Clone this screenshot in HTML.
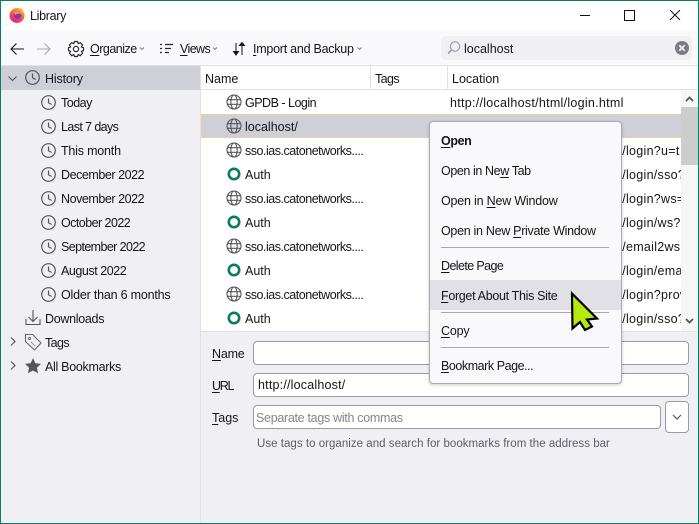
<!DOCTYPE html>
<html><head><meta charset="utf-8"><title>Library</title>
<style>
html,body{margin:0;padding:0}
body{width:699px;height:524px;position:relative;overflow:hidden;background:#fff;font-family:"Liberation Sans",sans-serif;font-size:12.5px;color:#15141a}
div,span.t{position:absolute}
.t{position:absolute;white-space:nowrap;line-height:16px;height:16px}
u{text-underline-offset:2px;text-decoration-thickness:1px}
svg{position:absolute;overflow:visible}
.f{background:#fff;border:1px solid #9a9aa3;border-radius:4px;box-sizing:border-box}
.sep{background:#a8a8ae;height:1px;left:441px;width:168px}
.d{height:1px;left:201px;width:480px;background:repeating-linear-gradient(90deg,#f7d96a 0 2px,transparent 2px 4px)}
</style></head><body>
<div style="left:1px;top:31px;width:697px;height:34px;background:#f9f9fb"></div>
<div style="left:1px;top:65px;width:697px;height:1px;background:#e0e0e6"></div>
<div style="left:1px;top:66px;width:199px;height:457px;background:#f0f0f4"></div>
<div style="left:200px;top:66px;width:1px;height:457px;background:#e0e0e6"></div>
<div style="left:1px;top:66px;width:199px;height:24px;background:#cfcfd8"></div>
<div style="left:201px;top:89px;width:497px;height:1px;background:#e0e0e6"></div>
<div style="left:370px;top:66px;width:1px;height:23px;background:#e0e0e6"></div>
<div style="left:447px;top:66px;width:1px;height:23px;background:#e0e0e6"></div>
<div style="left:201px;top:114px;width:480px;height:24px;background:#cfcfd8"></div>
<div class="d" style="top:114px"></div>
<div class="d" style="top:137px"></div>
<div style="left:201px;top:114px;width:1px;height:24px;background:repeating-linear-gradient(0deg,#f7d96a 0 2px,transparent 2px 4px)"></div>
<div style="left:681px;top:90px;width:17px;height:241px;background:#f6f6f6"></div>
<div style="left:681px;top:107px;width:17px;height:58px;background:#cdcdcd"></div>
<div style="left:201px;top:331px;width:497px;height:192px;background:#f0f0f4;border-top:1px solid #e0e0e6;box-sizing:border-box"></div>

<!-- title bar -->
<svg style="left:9px;top:7px" width="16" height="16" viewBox="0 0 16 16"><defs><linearGradient id="g" x1="0.8" y1="0" x2="0.2" y2="1"><stop offset="0" stop-color="#ffbd2e"/><stop offset=".5" stop-color="#ff5a36"/><stop offset="1" stop-color="#e31587"/></linearGradient></defs><circle cx="8" cy="8.5" r="7.5" fill="url(#g)"/><path d="M12 0C13 3 15 4 15.5 7L11 5Z" fill="#ffb02e"/><circle cx="8.5" cy="8" r="4" fill="#7a34d8"/><path d="M5 6C7 3 12 4 12.5 8 11 6 8 6 6.5 8Z" fill="#ff9a2e"/></svg>
<span class="t" style="left:30px;top:8px;letter-spacing:-.3px">Library</span>
<svg style="left:0;top:0" width="699" height="31"><path d="M580 15.5H590M624.5 10.5H634.5V20.5H624.5Z" fill="none" stroke="#111"/><path d="M670 10L680 20M680 10L670 20" stroke="#111" fill="none"/></svg>

<!-- toolbar -->
<svg style="left:0;top:31px" width="699" height="34">
<path d="M24 18H11M16.5 12.5L11 18L16.5 23.5" fill="none" stroke="#15141a" stroke-width="1.1"/>
<path d="M37 18H50M44.5 12.5L50 18L44.5 23.5" fill="none" stroke="#a9a9ae" stroke-width="1.1"/>
<g fill="none" stroke="#2b2a33" stroke-width="1.2"><circle cx="76" cy="18" r="2.6"/><path d="M74.5 10.5H77.5L78.2 12.6L80.3 11.7L82.5 13.9L81.5 16L83.5 16.7V19.7L81.5 20.3L82.5 22.4L80.3 24.6L78.2 23.6L77.5 25.5H74.5L73.8 23.6L71.7 24.6L69.5 22.4L70.5 20.3L68.5 19.7V16.7L70.5 16L69.5 13.9L71.7 11.7L73.8 12.6Z"/></g>
<path d="M140 16.5L142 18.5L144 16.5" fill="none" stroke="#777" stroke-width=".9"/>
<path d="M160 13.5H162M160 17.5H162M160 21.5H162M165 13.5H173M165 17.5H171M165 21.5H169" stroke="#2b2a33" stroke-width="1.2" fill="none"/>
<path d="M213 16.5L215 18.5L217 16.5" fill="none" stroke="#777" stroke-width=".9"/>
<path d="M236 12V23M233.5 20.5L236 24L238.5 20.5Z M242 24V12M239.5 14.5L242 11.5L244.5 14.5Z" fill="#15141a" stroke="#15141a" stroke-width="1"/>
<path d="M357.5 16.5L359.5 18.5L361.5 16.5" fill="none" stroke="#777" stroke-width=".9"/>
</svg>
<span class="t" style="left:90px;top:41px;letter-spacing:-.5px"><u>O</u>rganize</span>
<span class="t" style="left:180px;top:41px;letter-spacing:-.6px"><u>V</u>iews</span>
<span class="t" style="left:253px;top:41px;letter-spacing:-.25px"><u>I</u>mport and Backup</span>
<div style="left:441px;top:36px;width:251px;height:24px;background:#f0f0f4;border-radius:4px"></div>
<svg style="left:447px;top:41px" width="16" height="16"><circle cx="8" cy="5.5" r="4.7" fill="none" stroke="#8f8f9d" stroke-width="1"/><path d="M4.5 9L1 12.5" stroke="#8f8f9d" stroke-width="1.3"/></svg>
<span class="t" style="left:464px;top:41px">localhost</span>
<svg style="left:675px;top:41px" width="14" height="14"><circle cx="7" cy="7" r="7" fill="#7b7b82"/><path d="M4.3 4.3L9.7 9.7M9.7 4.3L4.3 9.7" stroke="#f0f0f4" stroke-width="1.8"/></svg>

<!-- sidebar -->
<svg style="left:0;top:66px" width="200" height="320" fill="none">
<defs><g id="c"><circle cx="7.5" cy="7.5" r="6.8" stroke="#55555c" stroke-width="1.2"/><path d="M7.5 3.5V7.8L10.8 9.5" stroke="#55555c" stroke-width="1.2"/></g></defs>
<path d="M8.5 10.5L12.5 14.5L16.5 10.5" stroke="#55555c" stroke-width="1.1"/>
<use href="#c" x="25" y="4"/><use href="#c" x="41" y="29"/><use href="#c" x="41" y="53"/><use href="#c" x="41" y="77"/><use href="#c" x="41" y="101"/><use href="#c" x="41" y="125"/><use href="#c" x="41" y="149"/><use href="#c" x="41" y="173"/><use href="#c" x="41" y="197"/><use href="#c" x="41" y="221"/>
<path d="M33 244V255M28.5 251L33 255.5L37.5 251M26 253V258.5H40V253" stroke="#55555c" stroke-width="1.1"/>
<path d="M11 271.5L15 275.5L11 279.5M11 295.5L15 299.5L11 303.5" stroke="#55555c" stroke-width="1.1"/>
<path d="M25.5 268.5L32.5 268.5L41 277L34.5 284L25.5 275.5Z" stroke="#6a6a70" stroke-width="1.1"/><circle cx="29.5" cy="272.5" r="1.1" stroke="#55555c" stroke-width=".8"/><path d="M31 276L35 280" stroke="#9a9aa0"/>
<path d="M33 292L35.4 297.2L41 297.9L36.9 301.7L38 307.3L33 304.5L28 307.3L29.1 301.7L25 297.9L30.6 297.2Z" fill="#55555c"/>
</svg>
<span class="t" style="left:45px;top:71px;letter-spacing:-.15px">History</span>
<span class="t" style="left:61px;top:95px;letter-spacing:-.5px">Today</span>
<span class="t" style="left:61px;top:119px;letter-spacing:-.6px">Last 7 days</span>
<span class="t" style="left:61px;top:143px;letter-spacing:-.2px">This month</span>
<span class="t" style="left:61px;top:167px;letter-spacing:-.45px">December 2022</span>
<span class="t" style="left:61px;top:191px;letter-spacing:-.45px">November 2022</span>
<span class="t" style="left:61px;top:215px;letter-spacing:-.55px">October 2022</span>
<span class="t" style="left:61px;top:239px;letter-spacing:-.6px">September 2022</span>
<span class="t" style="left:61px;top:263px;letter-spacing:-.45px">August 2022</span>
<span class="t" style="left:61px;top:287px;letter-spacing:-.2px">Older than 6 months</span>
<span class="t" style="left:45px;top:311px;letter-spacing:-.3px">Downloads</span>
<span class="t" style="left:45px;top:335px;letter-spacing:-.6px">Tags</span>
<span class="t" style="left:45px;top:359px;letter-spacing:-.3px">All Bookmarks</span>

<!-- table -->
<span class="t" style="left:205px;top:71px">Name</span>
<span class="t" style="left:375px;top:71px;letter-spacing:-.6px">Tags</span>
<span class="t" style="left:452px;top:71px">Location</span>
<svg style="left:201px;top:90px" width="60" height="240" fill="none">
<defs><g id="w" stroke="#55555c" stroke-width="1.1"><circle cx="33" cy="12" r="7"/><ellipse cx="33" cy="12" rx="3.2" ry="7"/><path d="M26 9.7H40M26 14.3H40"/></g><circle id="a" cx="33" cy="12" r="5.2" stroke="#0e7a5f" stroke-width="2.6"/></defs>
<use href="#w"/><use href="#w" y="24"/><use href="#w" y="48"/><use href="#a" y="72"/><use href="#w" y="96"/><use href="#a" y="120"/><use href="#w" y="144"/><use href="#a" y="168"/><use href="#w" y="192"/><use href="#a" y="216"/>
</svg>
<span class="t" style="left:245px;top:95px;letter-spacing:-.5px">GPDB - Login</span>
<span class="t" style="left:245px;top:119px">localhost/</span>
<span class="t" style="left:245px;top:143px;letter-spacing:-.48px">sso.ias.catonetworks....</span>
<span class="t" style="left:245px;top:167px">Auth</span>
<span class="t" style="left:245px;top:191px;letter-spacing:-.48px">sso.ias.catonetworks....</span>
<span class="t" style="left:245px;top:215px">Auth</span>
<span class="t" style="left:245px;top:239px;letter-spacing:-.48px">sso.ias.catonetworks....</span>
<span class="t" style="left:245px;top:263px">Auth</span>
<span class="t" style="left:245px;top:287px;letter-spacing:-.48px">sso.ias.catonetworks....</span>
<span class="t" style="left:245px;top:311px">Auth</span>
<span class="t" style="left:450px;top:95px;letter-spacing:.28px">http://localhost/html/login.html</span>
<div style="left:622px;top:138px;width:59px;height:193px;overflow:hidden;background:#fff;letter-spacing:.28px">
<span class="t" style="left:-7px;top:5px">n/login?u=t</span>
<span class="t" style="left:-7px;top:29px">n/login/sso?</span>
<span class="t" style="left:-7px;top:53px">n/login?ws=</span>
<span class="t" style="left:-7px;top:77px">n/login/ws?</span>
<span class="t" style="left:-7px;top:101px">n/email2ws?</span>
<span class="t" style="left:-7px;top:125px">n/login/ema</span>
<span class="t" style="left:-7px;top:149px">n/login?prov</span>
<span class="t" style="left:-7px;top:173px">n/login/sso?</span>
</div>
<svg style="left:681px;top:90px" width="17" height="241" fill="none"><path d="M5 11L8.5 7.5L12 11M5 229L8.5 232.5L12 229" stroke="#555" stroke-width="1.8"/></svg>

<!-- details -->
<span class="t" style="left:212px;top:346px;letter-spacing:-.2px"><u>N</u>ame</span>
<span class="t" style="left:212px;top:378px;letter-spacing:-1.3px"><u>U</u>RL</span>
<span class="t" style="left:212px;top:410px"><u>T</u>ags</span>
<div class="f" style="left:253px;top:341px;width:436px;height:24px"></div>
<div class="f" style="left:253px;top:373px;width:436px;height:24px"></div>
<span class="t" style="left:258px;top:377px;letter-spacing:.2px">http://localhost/</span>
<div class="f" style="left:253px;top:405px;width:408px;height:24px"></div>
<span class="t" style="left:256px;top:410px;color:#85858c;letter-spacing:-.3px">Separate tags with commas</span>
<div class="f" style="left:665px;top:401px;width:24px;height:32px"></div>
<svg style="left:665px;top:401px" width="24" height="32" fill="none"><path d="M8 14L12 18L16 14" stroke="#55555c" stroke-width="1.2"/></svg>
<span class="t" style="left:257px;top:436px;font-size:11.5px;color:#5b5b66;letter-spacing:.03px">Use tags to organize and search for bookmarks from the address bar</span>

<!-- context menu -->
<div style="left:429px;top:121px;width:193px;height:263px;background:#f9f9fb;border:1px solid #aaaab0;border-radius:4px;box-sizing:border-box;box-shadow:0 1px 3px rgba(0,0,0,.2)"></div>
<div style="left:430px;top:280px;width:191px;height:30px;background:#e0e0e6"></div>
<span class="t" style="left:441px;top:133px;font-weight:bold;letter-spacing:-.4px"><u>O</u>pen</span>
<span class="t" style="left:441px;top:163px;letter-spacing:-.4px">Open in Ne<u>w</u> Tab</span>
<span class="t" style="left:441px;top:193px;letter-spacing:-.2px">Open in <u>N</u>ew Window</span>
<span class="t" style="left:441px;top:223px;letter-spacing:-.3px">Open in New <u>P</u>rivate Window</span>
<div class="sep" style="top:247px"></div>
<span class="t" style="left:441px;top:258px;letter-spacing:-.6px"><u>D</u>elete Page</span>
<span class="t" style="left:441px;top:288px;letter-spacing:-.32px"><u>F</u>orget About This Site</span>
<div class="sep" style="top:312px"></div>
<span class="t" style="left:441px;top:323px;letter-spacing:-.2px"><u>C</u>opy</span>
<div class="sep" style="top:347px"></div>
<span class="t" style="left:441px;top:358px;letter-spacing:-.45px"><u>B</u>ookmark Page...</span>
<svg style="left:0;top:0" width="699" height="524"><path d="M572 293.5L597 318.5L587 319.5L592 326.5L585 330L580 322L572.5 328.5Z" fill="#b7e80e" stroke="#000" stroke-width="2.2" stroke-linejoin="miter"/></svg>

<!-- window border -->
<div style="left:0;top:0;width:699px;height:524px;box-sizing:border-box;border:1px solid #0a7d62"></div>
</body></html>
